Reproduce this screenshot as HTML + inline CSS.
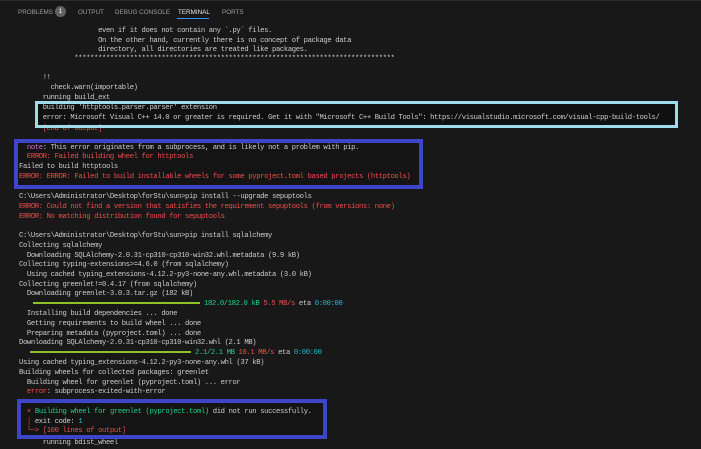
<!DOCTYPE html>
<html><head><meta charset="utf-8"><style>
*{margin:0;padding:0;box-sizing:border-box}
body{width:701px;height:445px;background:#181818;overflow:hidden;position:relative;font-family:"Liberation Mono",monospace;color:#cccccc}
.tabs{position:absolute;left:0;top:0;width:701px;height:24px;font-family:"Liberation Sans",sans-serif;font-size:6.3px;color:#9d9d9d}
.tabs span{position:absolute;top:9px}
.badge{position:absolute;left:55px;top:6px;width:11px;height:11px;border-radius:6px;background:#616161;color:#fff;font-size:6.5px;text-align:center;line-height:11px}
.ul{position:absolute;left:177px;top:18px;width:32px;height:1px;background:#3794ff}
.l{position:absolute;left:19px;font-size:7.2px;letter-spacing:-0.36px;line-height:9.8px;white-space:pre;height:10px}
.r{color:#f14c4c}.g{color:#23d18b}.c{color:#29b8db}.m{color:#d670d6}
.bar{display:inline-block;height:2px;background:#8cc22a;vertical-align:middle;margin-right:4px}
.box{position:absolute;border-style:solid;z-index:2}
.bg{position:absolute}
</style></head><body>
<div class="tabs">
<span style="left:18px">PROBLEMS</span><div class="badge">1</div>
<span style="left:78px">OUTPUT</span>
<span style="left:115px">DEBUG CONSOLE</span>
<span style="left:178px;color:#e7e7e7">TERMINAL</span>
<span style="left:222px">PORTS</span>
<div class="ul"></div>
</div>
<div style="position:absolute;left:0;top:0;width:701px;height:1px;background:#2b2b2b"></div>

<div class="bg" style="left:35px;top:101px;width:643px;height:27px;background:#101010"></div>
<div class="bg" style="left:14px;top:139px;width:409px;height:50px;background:#141414"></div>
<div class="bg" style="left:17px;top:399px;width:310px;height:40px;background:#141414"></div>
<div class="box" style="left:35px;top:101px;width:643px;height:27px;border-width:3px;border-color:#9fdbe8"></div>
<div class="box" style="left:14px;top:139px;width:409px;height:50px;border-width:4px;border-color:#3d46c8"></div>
<div class="box" style="left:17px;top:399px;width:310px;height:40px;border-width:4px;border-color:#3d46c8"></div>

<div class="l" style="top:27px">                    even if it does not contain any `.py` files.</div>
<div class="l" style="top:37px">                    On the other hand, currently there is no concept of package data</div>
<div class="l" style="top:46px">                    directory, all directories are treated like packages.</div>
<div class="l" style="top:55px">              *********************************************************************************</div>
<div class="l" style="top:74px">      !!</div>
<div class="l" style="top:84px">        check.warn(importable)</div>
<div class="l" style="top:94px">      running build_ext</div>
<div class="l" style="top:104px">      building 'httptools.parser.parser' extension</div>
<div class="l" style="top:114px">      error: Microsoft Visual C++ 14.0 or greater is required. Get it with "Microsoft C++ Build Tools": https://visualstudio.microsoft.com/visual-cpp-build-tools/</div>
<div class="l r" style="top:125px">      [end of output]</div>
<div class="l" style="top:144px">  <span class="m">note</span>: This error originates from a subprocess, and is likely not a problem with pip.</div>
<div class="l r" style="top:153px">  ERROR: Failed building wheel for httptools</div>
<div class="l" style="top:163px">Failed to build httptools</div>
<div class="l r" style="top:173px">ERROR: ERROR: Failed to build installable wheels for some pyproject.toml based projects (httptools)</div>
<div class="l" style="top:193px">C:\Users\Administrator\Desktop\forStu\sun>pip install --upgrade sepuptools</div>
<div class="l r" style="top:203px">ERROR: Could not find a version that satisfies the requirement sepuptools (from versions: none)</div>
<div class="l r" style="top:213px">ERROR: No matching distribution found for sepuptools</div>
<div class="l" style="top:232px">C:\Users\Administrator\Desktop\forStu\sun>pip install sqlalchemy</div>
<div class="l" style="top:242px">Collecting sqlalchemy</div>
<div class="l" style="top:252px">  Downloading SQLAlchemy-2.0.31-cp310-cp310-win32.whl.metadata (9.9 kB)</div>
<div class="l" style="top:261px">Collecting typing-extensions&gt;=4.6.0 (from sqlalchemy)</div>
<div class="l" style="top:271px">  Using cached typing_extensions-4.12.2-py3-none-any.whl.metadata (3.0 kB)</div>
<div class="l" style="top:281px">Collecting greenlet!=0.4.17 (from sqlalchemy)</div>
<div class="l" style="top:290px">  Downloading greenlet-3.0.3.tar.gz (182 kB)</div>
<div class="l" style="top:300px;left:33px"><span class="bar" style="width:167px"></span><span class="g">182.0/182.0 kB</span> <span class="r">5.5 MB/s</span> eta <span class="c">0:00:00</span></div>
<div class="l" style="top:310px">  Installing build dependencies ... done</div>
<div class="l" style="top:320px">  Getting requirements to build wheel ... done</div>
<div class="l" style="top:330px">  Preparing metadata (pyproject.toml) ... done</div>
<div class="l" style="top:339px">Downloading SQLAlchemy-2.0.31-cp310-cp310-win32.whl (2.1 MB)</div>
<div class="l" style="top:349px;left:30px"><span class="bar" style="width:161px"></span><span class="g">2.1/2.1 MB</span> <span class="r">10.1 MB/s</span> eta <span class="c">0:00:00</span></div>
<div class="l" style="top:359px">Using cached typing_extensions-4.12.2-py3-none-any.whl (37 kB)</div>
<div class="l" style="top:369px">Building wheels for collected packages: greenlet</div>
<div class="l" style="top:379px">  Building wheel for greenlet (pyproject.toml) ... error</div>
<div class="l" style="top:388px">  <span class="r">error</span>: subprocess-exited-with-error</div>
<div class="l" style="top:408px">  <span class="r">×</span> <span class="g">Building wheel for greenlet (pyproject.toml)</span> did not run successfully.</div>
<div class="l" style="top:418px">  <span class="r">│</span> exit code: <span class="c">1</span></div>
<div class="l" style="top:427px">  <span class="r">╰─&gt; [100 lines of output]</span></div>
<div class="l" style="top:439px">      running bdist_wheel</div>
</body></html>
